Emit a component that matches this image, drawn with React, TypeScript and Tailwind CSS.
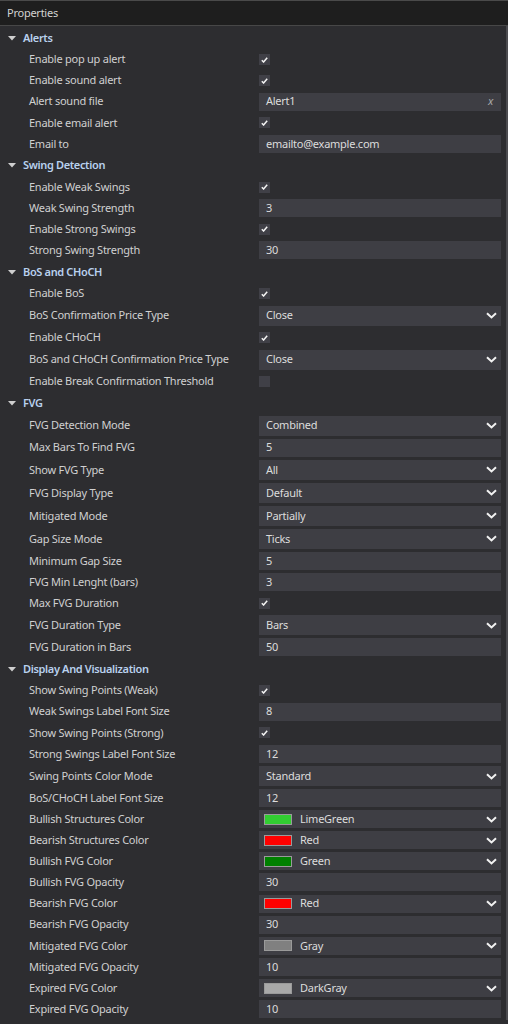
import React from "react";

type Row =
  | { kind: "section"; title: string }
  | { kind: "check"; label: string; checked: boolean }
  | { kind: "text"; label: string; value: string; clear?: boolean }
  | { kind: "select"; label: string; value: string }
  | { kind: "color"; label: string; value: string; swatch: string };

const rows: Row[] = [
  { kind: "section", title: "Alerts" },
  { kind: "check", label: "Enable pop up alert", checked: true },
  { kind: "check", label: "Enable sound alert", checked: true },
  { kind: "text", label: "Alert sound file", value: "Alert1", clear: true },
  { kind: "check", label: "Enable email alert", checked: true },
  { kind: "text", label: "Email to", value: "emailto@example.com" },
  { kind: "section", title: "Swing Detection" },
  { kind: "check", label: "Enable Weak Swings", checked: true },
  { kind: "text", label: "Weak Swing Strength", value: "3" },
  { kind: "check", label: "Enable Strong Swings", checked: true },
  { kind: "text", label: "Strong Swing Strength", value: "30" },
  { kind: "section", title: "BoS and CHoCH" },
  { kind: "check", label: "Enable BoS", checked: true },
  { kind: "select", label: "BoS Confirmation Price Type", value: "Close" },
  { kind: "check", label: "Enable CHoCH", checked: true },
  { kind: "select", label: "BoS and CHoCH Confirmation Price Type", value: "Close" },
  { kind: "check", label: "Enable Break Confirmation Threshold", checked: false },
  { kind: "section", title: "FVG" },
  { kind: "select", label: "FVG Detection Mode", value: "Combined" },
  { kind: "text", label: "Max Bars To Find FVG", value: "5" },
  { kind: "select", label: "Show FVG Type", value: "All" },
  { kind: "select", label: "FVG Display Type", value: "Default" },
  { kind: "select", label: "Mitigated Mode", value: "Partially" },
  { kind: "select", label: "Gap Size Mode", value: "Ticks" },
  { kind: "text", label: "Minimum Gap Size", value: "5" },
  { kind: "text", label: "FVG Min Lenght (bars)", value: "3" },
  { kind: "check", label: "Max FVG Duration", checked: true },
  { kind: "select", label: "FVG Duration Type", value: "Bars" },
  { kind: "text", label: "FVG Duration in Bars", value: "50" },
  { kind: "section", title: "Display And Visualization" },
  { kind: "check", label: "Show Swing Points (Weak)", checked: true },
  { kind: "text", label: "Weak Swings Label Font Size", value: "8" },
  { kind: "check", label: "Show Swing Points (Strong)", checked: true },
  { kind: "text", label: "Strong Swings Label Font Size", value: "12" },
  { kind: "select", label: "Swing Points Color Mode", value: "Standard" },
  { kind: "text", label: "BoS/CHoCH Label Font Size", value: "12" },
  { kind: "color", label: "Bullish Structures Color", value: "LimeGreen", swatch: "#32cd32" },
  { kind: "color", label: "Bearish Structures Color", value: "Red", swatch: "#ff0000" },
  { kind: "color", label: "Bullish FVG Color", value: "Green", swatch: "#008000" },
  { kind: "text", label: "Bullish FVG Opacity", value: "30" },
  { kind: "color", label: "Bearish FVG Color", value: "Red", swatch: "#ff0000" },
  { kind: "text", label: "Bearish FVG Opacity", value: "30" },
  { kind: "color", label: "Mitigated FVG Color", value: "Gray", swatch: "#808080" },
  { kind: "text", label: "Mitigated FVG Opacity", value: "10" },
  { kind: "color", label: "Expired FVG Color", value: "DarkGray", swatch: "#a9a9a9" },
  { kind: "text", label: "Expired FVG Opacity", value: "10" },
];

// row heights per editor kind
const rowHeight: Record<Row["kind"], string> = {
  section: "h-[22px]",
  check: "h-[21px]",
  text: "h-[21.25px]",
  select: "h-[23px]",
  color: "h-[21px]",
};

function Chevron() {
  return (
    <svg width="11" height="7" viewBox="0 0 11 7" className="ml-auto shrink-0">
      <path d="M1 1.2 L5.5 5.4 L10 1.2" fill="none" stroke="#f2f2f2" strokeWidth="2" />
    </svg>
  );
}

function CheckBox({ checked }: { checked: boolean }) {
  return (
    <div className="flex h-[11px] w-[11px] items-center justify-center bg-[#404047]">
      {checked && (
        <svg width="7" height="6" viewBox="0 0 7 6">
          <path d="M0.8 3.2 L2.6 5 L6.2 0.8" fill="none" stroke="#f4f4f4" strokeWidth="1.5" />
        </svg>
      )}
    </div>
  );
}

function Value({ row }: { row: Row }) {
  if (row.kind === "check") return <CheckBox checked={row.checked} />;
  if (row.kind === "text")
    return (
      <div className="flex h-[18px] flex-1 items-center bg-[#3e3e44] pl-[7px] pr-[8px] text-[#dcdcdc]">
        <span>{row.value}</span>
        {row.clear && <span className="ml-auto italic text-[#a8a8a8]">x</span>}
      </div>
    );
  if (row.kind === "select")
    return (
      <div className="flex h-[20px] flex-1 items-center bg-[#3e3e44] pl-[7px] pr-[4px] text-[#dcdcdc]">
        <span>{row.value}</span>
        <Chevron />
      </div>
    );
  if (row.kind === "color")
    return (
      <div className="flex h-[18px] flex-1 items-center bg-[#3e3e44] pl-[5px] pr-[4px] text-[#dcdcdc]">
        <span
          className="mr-[8px] h-[11px] w-[28px] border border-[#9a9a9a]"
          style={{ backgroundColor: row.swatch }}
        />
        <span>{row.value}</span>
        <Chevron />
      </div>
    );
  return null;
}

export default function App() {
  return (
    <div className="h-[1024px] w-[508px] overflow-hidden bg-[#2d2d30] font-['Noto_Sans',sans-serif] text-[11px] tracking-[-0.25px]">
      <div className="flex h-[26px] items-center border-y border-t-[#4a4a4a] border-b-[#474747] bg-[#1e1e1e] pl-[7px] text-[#d2d2d2]">
        Properties
      </div>
      <div className="flex">
        <div className="flex-1 pt-[1px]">
          {rows.map((row, i) =>
            row.kind === "section" ? (
              <div key={i} className={`flex items-center pl-[8px] ${rowHeight.section}`}>
                <svg width="8" height="5" viewBox="0 0 8 5" className="mr-[7px]">
                  <path d="M0 0 L8 0 L4 4.5 Z" fill="#cfcfcf" />
                </svg>
                <span className="font-semibold tracking-[-0.35px] text-[#b9d1ee]">{row.title}</span>
              </div>
            ) : (
              <div key={i} className={`flex items-center ${rowHeight[row.kind]}`}>
                <div className="w-[253px] shrink-0 pl-[29px] text-[#d0d0d0]">{row.label}</div>
                <div className="flex flex-1 items-center pl-[6px] pr-[5px]">
                  <Value row={row} />
                </div>
              </div>
            )
          )}
        </div>
        <div className="w-[2px] bg-[#4b4b4f]" />
      </div>
    </div>
  );
}
